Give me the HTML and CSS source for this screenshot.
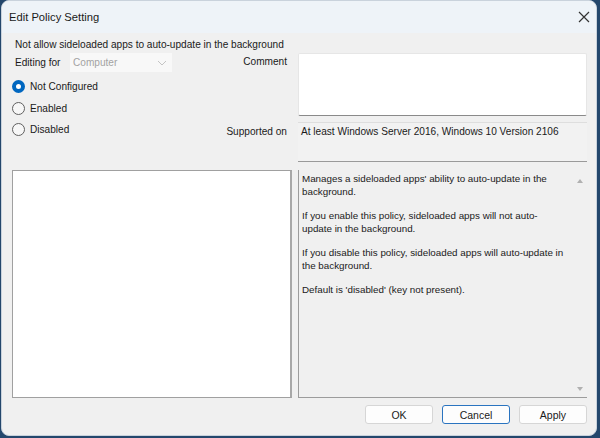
FILE: index.html
```html
<!DOCTYPE html>
<html>
<head>
<meta charset="utf-8">
<link rel="stylesheet" href="styles.css">
</head>
<body>
<div class="window">
  <div class="titlebar">
    <span class="title">Edit Policy Setting</span>
    <svg class="close" width="12" height="12" viewBox="0 0 12 12"><path d="M1 1L11 11M11 1L1 11" stroke="#333" stroke-width="1.2" fill="none"/></svg>
  </div>
  <div class="content">
    <div class="top">
      <div class="heading">Not allow sideloaded apps to auto-update in the background</div>
      <div class="left">
        <div class="editing">
          <span class="ed-label">Editing for</span>
          <div class="select"><span>Computer</span>
            <svg width="10" height="6" viewBox="0 0 10 6"><path d="M1 1L5 5L9 1" stroke="#c4c4c4" stroke-width="1" fill="none"/></svg>
          </div>
        </div>
        <div class="radios">
          <label class="radio"><span class="dot on"></span>Not Configured</label>
          <label class="radio"><span class="dot"></span>Enabled</label>
          <label class="radio"><span class="dot"></span>Disabled</label>
        </div>
      </div>
      <div class="lbl lbl-comment">Comment</div>
      <div class="box comment"></div>
      <div class="lbl lbl-supported">Supported on</div>
      <div class="box supported">At least Windows Server 2016, Windows 10 Version 2106</div>
    </div>
    <div class="bottom">
      <div class="options"></div>
      <div class="help">
        <div class="help-text">
          <p>Manages a sideloaded apps' ability to auto-update in the background.</p>
          <p>If you enable this policy, sideloaded apps will not auto-update in the background.</p>
          <p>If you disable this policy, sideloaded apps will auto-update in the background.</p>
          <p>Default is 'disabled' (key not present).</p>
        </div>
        <div class="scroll">
          <span class="arrow up"></span>
          <span class="arrow down"></span>
        </div>
      </div>
    </div>
    <div class="buttons">
      <button class="btn">OK</button>
      <button class="btn focus">Cancel</button>
      <button class="btn">Apply</button>
    </div>
  </div>
</div>
</body>
</html>
```
FILE: styles.css
```css
html, body {
  margin: 0;
  padding: 0;
}
body {
  width: 600px;
  height: 438px;
  background: #24476c;
  font-family: "Liberation Sans", Arial, sans-serif;
  font-size: 10.1px;
  color: #1a1a1a;
  overflow: hidden;
}
.window {
  margin: 0 3px 0 1px;
  height: 436px;
  border-radius: 8px;
  background: #f0f0f0;
  border: 1px solid #c9d2dc;
  box-sizing: border-box;
  display: flex;
  flex-direction: column;
  overflow: hidden;
}
.titlebar {
  height: 32px;
  flex: none;
  background: #eef3f8;
  display: flex;
  align-items: center;
  justify-content: space-between;
  padding: 0 6px 0 7px;
}
.title {
  font-size: 11.2px;
  color: #1a1a1a;
}
.close {
  display: block;
}
.content {
  flex: 1;
  display: flex;
  flex-direction: column;
  padding: 0 9px 0 10px;
}
.top {
  display: grid;
  grid-template-columns: 1fr auto 289px;
  grid-template-rows: auto 63px 40px;
  row-gap: 6px;
  margin-top: 5px;
}
.heading {
  grid-column: 1 / 4;
  padding-left: 3px;
  line-height: 14px;
  margin-bottom: -5px;
}
.left {
  grid-column: 1;
  grid-row: 2 / 4;
  display: flex;
  flex-direction: column;
}
.editing {
  display: flex;
  align-items: center;
  height: 19px;
}
.ed-label {
  padding-left: 3px;
  width: 55px;
}
.select {
  width: 102px;
  height: 19px;
  box-sizing: border-box;
  background: #f8f8f8;
  color: #a3a3a3;
  display: flex;
  align-items: center;
  justify-content: space-between;
  padding: 0 5px 0 3px;
}
.select svg {
  display: block;
}
.radios {
  display: flex;
  flex-direction: column;
  gap: 8.5px;
  margin-top: 8px;
}
.radio {
  display: flex;
  align-items: center;
  gap: 5px;
  height: 13px;
}
.dot {
  width: 13px;
  height: 13px;
  box-sizing: border-box;
  border-radius: 50%;
  border: 1px solid #606060;
  background: #f7f7f7;
}
.dot.on {
  border: 4px solid #0067c0;
  background: #fff;
}
.lbl {
  grid-column: 2;
  text-align: right;
  padding-right: 11px;
}
.lbl-comment {
  grid-row: 2;
  padding-top: 3px;
}
.lbl-supported {
  grid-row: 3;
  padding-top: 4px;
}
.box {
  grid-column: 3;
  box-sizing: border-box;
}
.comment {
  grid-row: 2;
  background: #fff;
  border: 1px solid #e6e6e6;
  border-bottom: 1px solid #8a8a8a;
  border-radius: 2px;
}
.supported {
  grid-row: 3;
  background: #f2f2f2;
  border-top: 1px solid #dedede;
  border-bottom: 1px solid #9a9a9a;
  padding: 3px 3px;
}
.bottom {
  display: grid;
  grid-template-columns: 280px 289px;
  column-gap: 6px;
  height: 228px;
  margin-top: 8px;
}
.options {
  background: #fff;
  border: 1px solid #a0a0a0;
  border-right: 2px solid #a8a8a8;
}
.help {
  display: flex;
  background: #f0f0f0;
  border-left: 1px solid #9c9c9c;
  border-bottom: 1px solid #9c9c9c;
}
.help-text {
  flex: 1;
  padding: 3px 8px 0 3px;
  font-size: 9.8px;
  line-height: 12.5px;
}
.help-text p {
  margin: 0 0 12px;
}
.scroll {
  width: 14px;
  display: flex;
  flex-direction: column;
  justify-content: space-between;
  align-items: center;
  padding: 9px 0 6px;
}
.arrow {
  width: 0;
  height: 0;
  border-left: 3.5px solid transparent;
  border-right: 3.5px solid transparent;
}
.arrow.up {
  border-bottom: 4px solid #b0b0b0;
}
.arrow.down {
  border-top: 4px solid #b0b0b0;
}
.buttons {
  display: flex;
  justify-content: flex-end;
  gap: 9px;
  margin-top: 7px;
}
.btn {
  width: 68px;
  height: 19px;
  font-family: "Liberation Sans", Arial, sans-serif;
  font-size: 10.5px;
  color: #1a1a1a;
  background: #fdfdfd;
  border: 1px solid #d6d6d6;
  border-radius: 3px;
  padding: 0;
}
.btn.focus {
  border: 1px solid #2a74c0;
}
```
